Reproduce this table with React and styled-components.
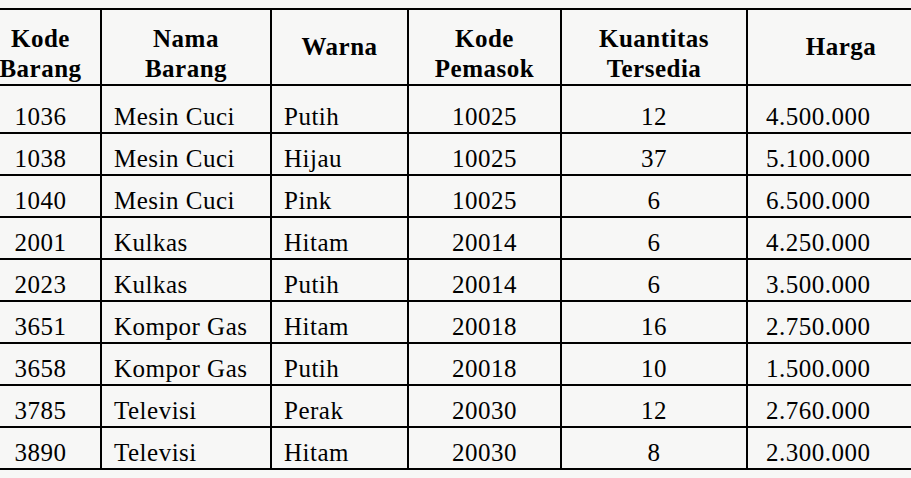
import React from "react";
import styled, { createGlobalStyle } from "styled-components";

const GlobalStyle = createGlobalStyle`
  html, body {
    margin: 0;
    padding: 0;
    background: #f7f7f6;
    overflow: hidden;
  }
  body {
    font-family: "Liberation Serif", "Times New Roman", Times, serif;
    color: #000;
  }
`;

const Page = styled.div`
  width: 911px;
  height: 478px;
  overflow: hidden;
  padding-top: 8px;
  box-sizing: border-box;
`;

const Table = styled.table`
  border-collapse: collapse;
  table-layout: fixed;
  margin-left: -21px;
  width: 955px;
  font-family: "Liberation Serif", "Times New Roman", Times, serif;
  font-size: 25px;
  letter-spacing: 0.5px;
  color: #000;
`;

const Col = styled.col`
  width: ${p => p.w}px;
`;

const HeadCell = styled.th`
  border: 2px solid #000;
  height: 73px;
  padding: 0 0 1px;
  font-family: "Liberation Serif", "Times New Roman", Times, serif;
  font-weight: bold;
  line-height: 29.5px;
  text-align: center;
  vertical-align: ${p => (p.single ? "middle" : "bottom")};
`;

const Cell = styled.td`
  border: 2px solid #000;
  height: ${p => (p.first ? 46 : 40)}px;
  padding: 0 0 0 ${p => p.pad || 0}px;
  font-family: "Liberation Serif", "Times New Roman", Times, serif;
  line-height: 1.15;
  vertical-align: bottom;
  text-align: ${p => (p.left ? "left" : "center")};
  white-space: nowrap;
`;

const rows = [
  ["1036", "Mesin Cuci", "Putih", "10025", "12", "4.500.000"],
  ["1038", "Mesin Cuci", "Hijau", "10025", "37", "5.100.000"],
  ["1040", "Mesin Cuci", "Pink", "10025", "6", "6.500.000"],
  ["2001", "Kulkas", "Hitam", "20014", "6", "4.250.000"],
  ["2023", "Kulkas", "Putih", "20014", "6", "3.500.000"],
  ["3651", "Kompor Gas", "Hitam", "20018", "16", "2.750.000"],
  ["3658", "Kompor Gas", "Putih", "20018", "10", "1.500.000"],
  ["3785", "Televisi", "Perak", "20030", "12", "2.760.000"],
  ["3890", "Televisi", "Hitam", "20030", "8", "2.300.000"],
];

export default function App() {
  return (
    <Page>
      <GlobalStyle />
      <Table>
        <colgroup>
          <Col w={121} />
          <Col w={170} />
          <Col w={137} />
          <Col w={153} />
          <Col w={186} />
          <Col w={188} />
        </colgroup>
        <thead>
          <tr>
            <HeadCell>Kode<br />Barang</HeadCell>
            <HeadCell>Nama<br />Barang</HeadCell>
            <HeadCell single>Warna</HeadCell>
            <HeadCell>Kode<br />Pemasok</HeadCell>
            <HeadCell>Kuantitas<br />Tersedia</HeadCell>
            <HeadCell single>Harga</HeadCell>
          </tr>
        </thead>
        <tbody>
          {rows.map((r, i) => (
            <tr key={r[0]}>
              <Cell first={i === 0}>{r[0]}</Cell>
              <Cell first={i === 0} left pad={12}>{r[1]}</Cell>
              <Cell first={i === 0} left pad={12}>{r[2]}</Cell>
              <Cell first={i === 0}>{r[3]}</Cell>
              <Cell first={i === 0}>{r[4]}</Cell>
              <Cell first={i === 0} left pad={18}>{r[5]}</Cell>
            </tr>
          ))}
        </tbody>
      </Table>
    </Page>
  );
}
